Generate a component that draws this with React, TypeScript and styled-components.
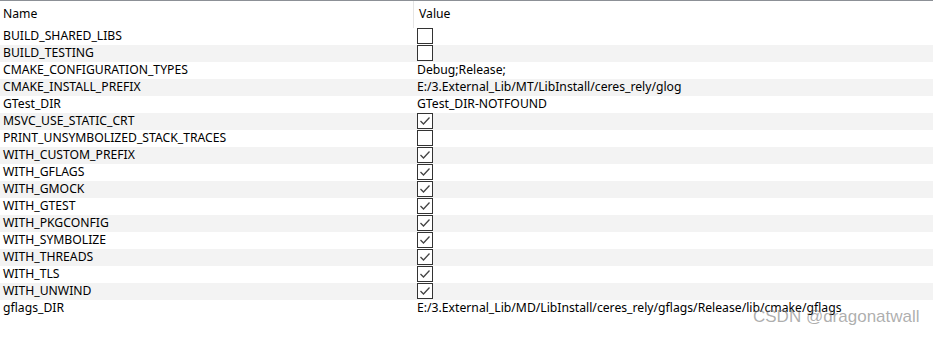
import React from 'react';
import styled, { createGlobalStyle } from 'styled-components';

const GlobalStyle = createGlobalStyle`
  html, body {
    margin: 0;
    padding: 0;
    background: #ffffff;
  }
  body {
    font-family: 'Noto Sans', 'Open Sans', sans-serif;
    font-size: 12.2px;
    color: #000;
  }
`;

const Page = styled.div`
  position: relative;
  width: 933px;
  height: 337px;
  overflow: hidden;
  border-top: 1px solid #8c9096;
  box-sizing: border-box;
`;

const Grid = styled.div`
  display: grid;
  grid-template-columns: 413px 1fr;
`;

const HeaderCell = styled.div<{ divider?: boolean }>`
  height: 27px;
  display: flex;
  align-items: center;
  padding-left: ${({ divider }) => (divider ? '5px' : '3px')};
  box-sizing: border-box;
  border-left: ${({ divider }) => (divider ? '1px solid #e5e5e5' : 'none')};
  line-height: 1;
`;

const Row = styled.div<{ shaded: boolean }>`
  display: contents;
  & > div {
    background: ${({ shaded }) => (shaded ? '#f3f3f3' : '#ffffff')};
  }
`;

const NameCell = styled.div`
  height: 17px;
  padding-left: 3px;
  display: flex;
  align-items: center;
  white-space: nowrap;
  line-height: 1;
`;

const ValueCell = styled.div`
  height: 17px;
  padding-left: 4px;
  display: flex;
  align-items: center;
  white-space: nowrap;
  line-height: 1;
`;

const Box = styled.div`
  width: 16px;
  height: 16px;
  box-sizing: border-box;
  border: 1px solid #333333;
  background: #ffffff;
  display: flex;
  align-items: center;
  justify-content: center;
  align-self: flex-start;
`;

const Watermark = styled.div`
  position: absolute;
  left: 753px;
  top: 306px;
  font-family: 'Liberation Sans', Arial, sans-serif;
  font-size: 17px;
  color: rgba(120, 120, 120, 0.6);
  white-space: nowrap;
`;

type Entry = { name: string; value?: string; checked?: boolean };

const entries: Entry[] = [
  { name: 'BUILD_SHARED_LIBS', checked: false },
  { name: 'BUILD_TESTING', checked: false },
  { name: 'CMAKE_CONFIGURATION_TYPES', value: 'Debug;Release;' },
  { name: 'CMAKE_INSTALL_PREFIX', value: 'E:/3.External_Lib/MT/LibInstall/ceres_rely/glog' },
  { name: 'GTest_DIR', value: 'GTest_DIR-NOTFOUND' },
  { name: 'MSVC_USE_STATIC_CRT', checked: true },
  { name: 'PRINT_UNSYMBOLIZED_STACK_TRACES', checked: false },
  { name: 'WITH_CUSTOM_PREFIX', checked: true },
  { name: 'WITH_GFLAGS', checked: true },
  { name: 'WITH_GMOCK', checked: true },
  { name: 'WITH_GTEST', checked: true },
  { name: 'WITH_PKGCONFIG', checked: true },
  { name: 'WITH_SYMBOLIZE', checked: true },
  { name: 'WITH_THREADS', checked: true },
  { name: 'WITH_TLS', checked: true },
  { name: 'WITH_UNWIND', checked: true },
  { name: 'gflags_DIR', value: 'E:/3.External_Lib/MD/LibInstall/ceres_rely/gflags/Release/lib/cmake/gflags' },
];

const CheckBox = ({ checked }: { checked: boolean }) => (
  <Box>
    {checked && (
      <svg width="12" height="10" viewBox="0 0 12 10">
        <path d="M1.5 5 L4.5 8 L10.5 1.5" fill="none" stroke="#444444" strokeWidth="1.3" />
      </svg>
    )}
  </Box>
);

const App = () => (
  <Page>
    <GlobalStyle />
    <Grid>
      <HeaderCell>Name</HeaderCell>
      <HeaderCell divider>Value</HeaderCell>
      {entries.map((e, i) => (
        <Row key={e.name} shaded={i % 2 === 1}>
          <NameCell>{e.name}</NameCell>
          <ValueCell>
            {e.value !== undefined ? e.value : <CheckBox checked={!!e.checked} />}
          </ValueCell>
        </Row>
      ))}
    </Grid>
    <Watermark>CSDN @dragonatwall</Watermark>
  </Page>
);

export default App;
